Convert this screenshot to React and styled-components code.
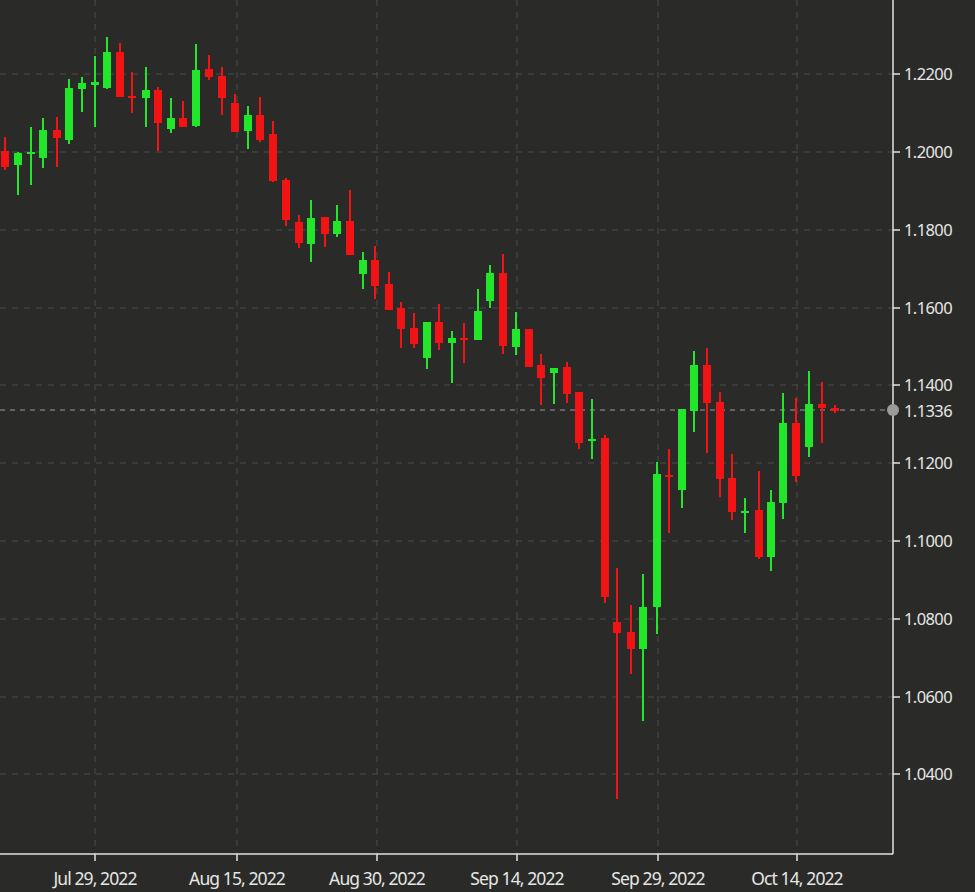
import React from "react";
import styled, { createGlobalStyle } from "styled-components";

const Global = createGlobalStyle`
  html, body { margin: 0; padding: 0; background: #2a2b29; }
`;

const Frame = styled.div`
  width: 975px;
  height: 892px;
  background: #2a2b29;
  overflow: hidden;
`;

const Chart = styled.svg`
  display: block;
  font-family: "Noto Sans", "Open Sans", sans-serif;
`;

const GREEN = "#22e62a";
const RED = "#f21414";

// x, wickTop, wickBottom, bodyTop, bodyBottom, colour (pixel coords)
const candles = [
  [5, 137, 170, 151, 167, "r"], [18, 152, 195, 153, 165, "g"], [31, 127, 185, 152, 154, "g"],
  [43, 118, 168, 130, 158, "g"], [57, 117, 167, 130, 138, "r"], [69, 79, 144, 88, 140, "g"],
  [82, 77, 112, 83, 89, "g"], [95, 56, 127, 82, 85, "g"], [107, 37, 89, 52, 88, "g"],
  [120, 43, 97, 52, 97, "r"], [132, 72, 113, 96, 98, "r"], [146, 67, 127, 90, 98, "g"],
  [158, 87, 151, 90, 123, "r"], [171, 98, 133, 118, 129, "g"], [183, 101, 127, 118, 127, "r"],
  [196, 44, 127, 70, 126, "g"], [209, 55, 80, 69, 77, "r"], [222, 67, 115, 76, 98, "r"],
  [235, 94, 132, 103, 132, "r"], [248, 106, 149, 115, 131, "g"], [260, 97, 142, 115, 140, "r"],
  [273, 121, 182, 134, 181, "r"], [286, 178, 226, 180, 220, "r"], [299, 215, 248, 222, 243, "r"],
  [311, 200, 262, 218, 244, "g"], [325, 217, 247, 217, 234, "r"], [337, 205, 237, 221, 234, "g"],
  [350, 190, 255, 221, 255, "r"], [363, 252, 289, 260, 274, "g"], [375, 246, 299, 260, 286, "r"],
  [389, 272, 310, 284, 310, "r"], [401, 302, 348, 308, 329, "r"], [414, 313, 348, 328, 344, "r"],
  [427, 322, 369, 322, 358, "g"], [439, 304, 350, 322, 343, "r"], [452, 331, 383, 338, 343, "g"],
  [464, 323, 363, 338, 340, "r"], [478, 289, 340, 311, 340, "g"], [490, 265, 308, 273, 301, "g"],
  [503, 254, 354, 273, 346, "r"], [516, 312, 355, 329, 347, "g"], [529, 329, 367, 329, 367, "r"],
  [541, 354, 405, 365, 378, "r"], [554, 368, 404, 368, 373, "g"], [567, 362, 403, 367, 394, "r"],
  [579, 392, 449, 392, 443, "r"], [592, 399, 459, 439, 441, "g"], [605, 435, 603, 438, 597, "r"],
  [617, 568, 799, 622, 633, "r"], [631, 605, 674, 632, 649, "r"], [643, 574, 721, 607, 649, "g"],
  [657, 462, 634, 474, 607, "g"], [669, 449, 533, 475, 477, "r"], [682, 409, 508, 409, 490, "g"],
  [694, 351, 432, 365, 411, "g"], [707, 348, 453, 365, 403, "r"], [720, 392, 497, 402, 479, "r"],
  [732, 454, 520, 478, 512, "r"], [745, 498, 533, 511, 513, "g"], [759, 471, 559, 510, 557, "r"],
  [771, 490, 571, 502, 557, "g"], [783, 393, 519, 423, 503, "g"], [796, 398, 482, 423, 476, "r"],
  [809, 371, 457, 404, 447, "g"], [822, 382, 443, 404, 408, "r"], [835, 405, 413, 408, 411, "r"],
];

const prices = [
  ["1.2200", 74], ["1.2000", 152], ["1.1800", 230], ["1.1600", 308], ["1.1400", 385],
  ["1.1200", 463], ["1.1000", 541], ["1.0800", 619], ["1.0600", 697], ["1.0400", 774],
];

const dates = [
  ["Jul 29, 2022", 95], ["Aug 15, 2022", 237], ["Aug 30, 2022", 377],
  ["Sep 14, 2022", 517], ["Sep 29, 2022", 658], ["Oct 14, 2022", 797],
];

const AXIS_X = 893;
const AXIS_Y = 854;
const LAST_Y = 410;

export default function App() {
  return (
    <Frame>
      <Global />
      <Chart width="975" height="892" viewBox="0 0 975 892">
        {prices.map(([, y]) => (
          <line key={y} x1="0" x2={AXIS_X} y1={y} y2={y} stroke="#4a4b48" strokeDasharray="6 6" />
        ))}
        {dates.map(([, x]) => (
          <line key={x} x1={x} x2={x} y1="0" y2={AXIS_Y} stroke="#4a4b48" strokeDasharray="6 6" />
        ))}
        <line x1="0" x2={AXIS_X} y1={LAST_Y} y2={LAST_Y} stroke="#9a9a98" strokeDasharray="5 5" />

        {candles.map(([x, wt, wb, bt, bb, c], i) => {
          const col = c === "g" ? GREEN : RED;
          return (
            <g key={i}>
              <rect x={x - 1} y={wt} width="2" height={wb - wt} fill={col} />
              <rect x={x - 4} y={bt} width="8" height={Math.max(2, bb - bt)} fill={col} />
            </g>
          );
        })}

        <line x1={AXIS_X} x2={AXIS_X} y1="0" y2={AXIS_Y} stroke="#e2e2e0" strokeWidth="1.5" />
        <line x1="0" x2={AXIS_X} y1={AXIS_Y} y2={AXIS_Y} stroke="#e2e2e0" strokeWidth="1.5" />
        {prices.map(([t, y]) => (
          <g key={t}>
            <line x1={AXIS_X} x2={AXIS_X + 7} y1={y} y2={y} stroke="#e2e2e0" strokeWidth="1.5" />
            <text x="904" y={y + 6} fill="#e6e6e4" fontSize="16.5" letterSpacing="-0.6">{t}</text>
          </g>
        ))}
        <circle cx={AXIS_X} cy={LAST_Y} r="6" fill="#9a9a98" />
        <text x="904" y={LAST_Y + 7} fill="#e6e6e4" fontSize="16.5" letterSpacing="-0.6">1.1336</text>
        {dates.map(([t, x]) => (
          <g key={t}>
            <line x1={x} x2={x} y1={AXIS_Y} y2={AXIS_Y + 7} stroke="#e2e2e0" strokeWidth="1.5" />
            <text x={x} y="885" fill="#e6e6e4" fontSize="17.5" textAnchor="middle" letterSpacing="-0.9">{t}</text>
          </g>
        ))}
      </Chart>
    </Frame>
  );
}
